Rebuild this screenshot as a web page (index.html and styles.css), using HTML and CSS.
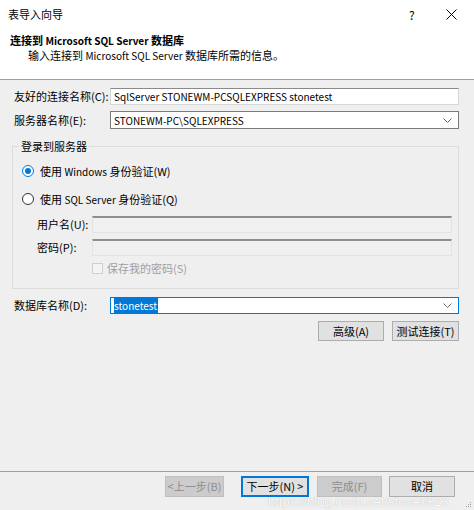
FILE: index.html
```html
<!DOCTYPE html>
<html lang="zh-CN">
<head>
  <meta charset="UTF-8">
  <title>表导入向导</title>
  <link rel="stylesheet" href="styles.css">
</head>
<body>
<div class="window">
  <!-- 标题栏 -->
  <div class="titlebar">
    <span class="title">表导入向导</span>
    <span class="help">?</span>
    <span class="close">
      <svg width="11" height="11" viewBox="0 0 11 11"><path d="M0.5 0.5L10.5 10.5M10.5 0.5L0.5 10.5" stroke="#000" stroke-width="1" fill="none"/></svg>
    </span>
  </div>
  <div class="banner">
    <div class="banner-title">连接到 <span class="en">Microsoft SQL Server</span> 数据库</div>
    <div class="banner-sub">输入连接到 <span class="en">Microsoft SQL Server</span> 数据库所需的信息。</div>
  </div>

  <div class="content">
    <div class="row row-name">
      <label class="label">友好的连接名称(C):</label>
      <div class="textbox">SqlServer STONEWM-PCSQLEXPRESS stonetest</div>
    </div>
    <div class="row row-server">
      <label class="label">服务器名称(E):</label>
      <div class="combo">
        <span class="combo-text">STONEWM-PC\SQLEXPRESS</span>
        <svg class="arrow" width="9" height="5" viewBox="0 0 9 5"><path d="M0.5 0.5L4.5 4.5L8.5 0.5" stroke="#6d6d6d" fill="none"/></svg>
      </div>
    </div>

    <div class="group">
      <div class="group-title">登录到服务器</div>
      <div class="radio-row first">
        <span class="radio checked"></span>
        <span>使用 <span class="en">Windows</span> 身份验证(W)</span>
      </div>
      <div class="radio-row second">
        <span class="radio"></span>
        <span>使用 <span class="en">SQL Server</span> 身份验证(Q)</span>
      </div>
      <div class="cred-row user">
        <label class="cred-label">用户名(U):</label>
        <div class="textbox disabled"></div>
      </div>
      <div class="cred-row pass">
        <label class="cred-label">密码(P):</label>
        <div class="textbox disabled"></div>
      </div>
      <div class="check-row">
        <span class="checkbox"></span>
        <span class="muted">保存我的密码(S)</span>
      </div>
    </div>

    <div class="row row-db">
      <label class="label">数据库名称(D):</label>
      <div class="combo focused">
        <span class="combo-text"><span class="selected">stonetest</span></span>
        <svg class="arrow" width="9" height="5" viewBox="0 0 9 5"><path d="M0.5 0.5L4.5 4.5L8.5 0.5" stroke="#6d6d6d" fill="none"/></svg>
      </div>
    </div>
    <div class="actions">
      <button class="btn adv">高级(A)</button>
      <button class="btn test">测试连接(T)</button>
    </div>
  </div>

  <div class="footer">
    <button class="btn back" disabled>&lt;上一步(B)</button>
    <button class="btn next default">下一步(N) &gt;</button>
    <button class="btn finish" disabled>完成(F)</button>
    <button class="btn cancel">取消</button>
    <svg class="grip" width="6" height="6" viewBox="0 0 6 6">
      <rect x="4" y="0" width="1" height="1" fill="#a0a0a0"/>
      <rect x="2" y="2" width="1" height="1" fill="#a0a0a0"/>
      <rect x="4" y="2" width="1" height="1" fill="#a0a0a0"/>
      <rect x="0" y="4" width="1" height="1" fill="#a0a0a0"/>
      <rect x="2" y="4" width="1" height="1" fill="#a0a0a0"/>
      <rect x="4" y="4" width="1" height="1" fill="#a0a0a0"/>
    </svg>
    <span class="watermark">https://blog.csdn.net/stone0823</span>
  </div>
</div>
</body>
</html>
```

FILE: styles.css
```css
html, body {
  margin: 0;
  padding: 0;
}

body {
  font-family: "Noto Sans CJK SC", "Noto Sans", sans-serif;
  font-size: 11px;
  line-height: 13px;
  color: #000;
}

/* 中文里夹的英文字要窄一些 */
.en {
  font-size: 10px;
}

.window {
  width: 474px;
  height: 510px;
  background: #efefef;
  display: flex;
  flex-direction: column;
  box-sizing: border-box;
}

/* 标题栏 */
.titlebar {
  height: 30px;
  background: #fff;
  display: flex;
  align-items: center;
  padding: 0 0 2px 8px;
  box-sizing: border-box;
}
.title {
  flex: 1;
}
.help {
  width: 10px;
  font-size: 12px;
  margin-right: 27px;
}
.close {
  width: 11px;
  height: 11px;
  margin-right: 17px;
  display: flex;
}

.banner {
  height: 50px;
  background: #fff;
  border-bottom: 1px solid #a0a0a0;
  padding: 3px 0 0 10px;
  box-sizing: border-box;
  line-height: 15px;
}
.banner-title {
  font-weight: bold;
}
.banner-sub {
  padding-left: 18px;
}

/* 表单 */
.content {
  flex: 1;
  padding: 0 15px 0 12px;
}
.row {
  display: flex;
  align-items: center;
}
.label {
  width: 98px;
  padding-left: 2px;
  box-sizing: border-box;
  white-space: nowrap;
}
.row-name { margin-top: 8px; }
.row-server { margin-top: 6px; }
.row-db { margin-top: 8px; }

.textbox {
  flex: 1;
  height: 17px;
  line-height: 15px;
  font-size: 10px;
  padding-left: 3px;
  background: #fff;
  border: 1px solid #d6d6d6;
  border-top-color: #8a8a8a;
  box-sizing: border-box;
  white-space: nowrap;
  overflow: hidden;
}
.textbox.disabled {
  background: #f0f0f0;
  border-color: #e3e3e3;
  border-top: 2px solid #8e8e8e;
}

.combo {
  flex: 1;
  height: 18px;
  display: flex;
  align-items: center;
  font-size: 10px;
  background: #fff;
  border: 1px solid #7a7a7a;
  box-sizing: border-box;
  padding: 0 6px 0 3px;
}
.combo.focused {
  height: 17px;
  border-color: #0078d7;
}
.combo-text {
  flex: 1;
}
.selected {
  background: #0078d7;
  color: #fff;
  padding: 0 1px 1px 0;
}
.arrow {
  display: block;
}

/* 登录到服务器 */
.group {
  margin-top: 17px;
  border: 1px solid #dcdcdc;
  height: 143px;
  box-sizing: border-box;
}
.group-title {
  width: max-content;
  margin: -7px 0 0 6px;
  padding: 0 2px;
  background: #efefef;
}
.radio-row {
  display: flex;
  align-items: center;
  height: 16px;
  padding-left: 9px;
  gap: 6px;
}
.radio-row.first { margin-top: 10px; }
.radio-row.second { margin-top: 12px; }
.radio {
  width: 12px;
  height: 12px;
  border: 1px solid #333;
  border-radius: 50%;
  box-sizing: border-box;
  background: #fff;
  display: flex;
  align-items: center;
  justify-content: center;
}
.radio.checked {
  border-color: #0078d7;
}
.radio.checked::after {
  content: "";
  width: 6px;
  height: 6px;
  border-radius: 50%;
  background: #0078d7;
}

.cred-row {
  display: flex;
  align-items: center;
  padding: 0 6px 0 24px;
}
.cred-row.user { margin-top: 9px; }
.cred-row.pass { margin-top: 6px; }
.cred-label {
  flex: 0 0 55px;
}

.check-row {
  display: flex;
  align-items: center;
  height: 16px;
  margin-top: 4px;
  padding-left: 79px;
  gap: 4px;
}
.checkbox {
  width: 11px;
  height: 11px;
  border: 1px solid #cfcfcf;
  box-sizing: border-box;
  background: #f4f4f4;
}
.muted {
  color: #a0a0a0;
}

/* 按钮 */
.actions {
  display: flex;
  justify-content: flex-end;
  gap: 8px;
  margin-top: 7px;
}
.btn {
  height: 20px;
  font: inherit;
  color: #000;
  background: #e1e1e1;
  border: 1px solid #adadad;
  padding: 0;
  box-sizing: border-box;
  white-space: nowrap;
}
.adv { width: 66px; }
.test { width: 67px; }

.footer {
  height: 39px;
  border-top: 1px solid #a0a0a0;
  box-sizing: border-box;
  display: flex;
  align-items: flex-start;
  padding: 4px 0 0 165px;
  position: relative;
}
.footer .btn {
  height: 21px;
}
.btn[disabled] {
  background: #cccccc;
  border-color: #bfbfbf;
  color: #8d8d8d;
}
.back { width: 59px; margin-right: 17px; }
.next { width: 68px; margin-right: 8px; }
.finish { width: 65px; margin-right: 7px; }
.cancel { width: 66px; }
.default {
  border: 2px solid #0078d7;
}
.grip {
  position: absolute;
  right: 2px;
  bottom: 2px;
}
/* 图片水印 */
.watermark {
  position: absolute;
  left: 268px;
  top: 23px;
  font-family: "Liberation Sans", sans-serif;
  font-size: 13px;
  line-height: 14px;
  color: #fff;
  text-shadow: 0 0 1px rgba(0, 0, 0, 0.35);
  opacity: 0.85;
  pointer-events: none;
}
```
